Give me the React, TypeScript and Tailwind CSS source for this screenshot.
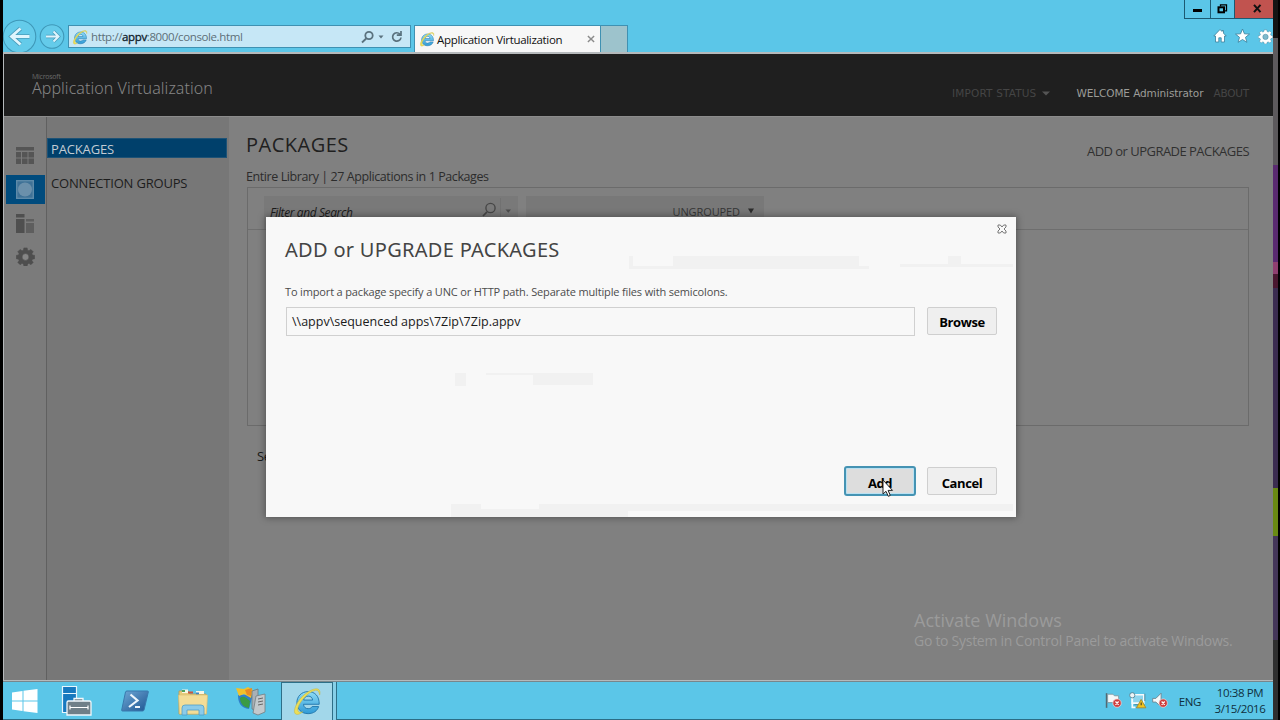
import React from "react";

function IeLogo({ size, id }: { size: number; id: string }) {
  return (
    <svg width={size} height={size} viewBox="0 0 32 32" className="shrink-0">
      <defs>
        <linearGradient id={id} x1="0" y1="0" x2="0" y2="1">
          <stop offset="0" stopColor="#8fdcf6" />
          <stop offset="1" stopColor="#2f9ad6" />
        </linearGradient>
      </defs>
      <path
        d="M29 19.5H12.2c.3 3 2.200 4.700 5 4.700 2 0 3.500-.8 4.300-2.300h6.900C27 26.500 23 29.500 17.200 29.500 10.200 29.500 5.200 24.700 5.200 17.800 5.200 11 10.200 6 17.200 6c7.400 0 12 5 11.800 13.500zM12.400 15h9.600c-.3-2.600-2-4.200-4.700-4.200s-4.500 1.600-4.900 4.200z"
        fill={`url(#${id})`}
        stroke="#2277ad"
        strokeWidth="1"
      />
      <path
        d="M29.500 9.500c.8-3 .2-5.600-2-6.300C22.500 1.800 12 8 6 17.500 2 24 1.500 29.500 4.800 30.200c2 .4 4.400-.8 6.700-2.700-3 1.200-5.600.7-5.300-3C6.600 18.500 17 6 25 4.500c2.600-.4 4 1.500 4.500 5z"
        fill="#ecdf58"
        stroke="#c4b649"
        strokeWidth=".6"
      />
    </svg>
  );
}

function Gear({ size, fill, hole, stroke }: { size: number; fill: string; hole: string; stroke: string }) {
  return (
    <svg width={size} height={size} viewBox="0 0 20 20" className="shrink-0">
      <path
        d="M8.300 1h3.400l.5 2.400 1.400.6 2.100-1.400 2.400 2.400-1.400 2.100.6 1.300 2.400.5v3.400l-2.400.5-.6 1.300 1.400 2.100-2.400 2.400-2.100-1.400-1.400.6-.5 2.200H8.300l-.5-2.200-1.400-.6-2.100 1.400-2.400-2.400 1.400-2.100-.6-1.300L.3 12.300V8.900l2.400-.5.6-1.300L1.900 5l2.400-2.400L6.400 4l1.400-.6z"
        fill={fill}
        stroke={stroke}
        strokeWidth=".6"
      />
      <circle cx="10" cy="10.500" r="3.600" fill={hole} stroke={stroke} strokeWidth=".6" />
    </svg>
  );
}

function BrowserBar() {
  return (
    <div className="flex h-[52px] shrink-0 bg-[#5bc6e8]">
      <div className="flex w-[411px] items-end">
        <svg width="65" height="34" viewBox="0 0 65 34" className="shrink-0">
          <g fill="#64cbea" stroke="#3f98b8" strokeWidth="1.100">
            <circle cx="16.500" cy="18.500" r="16.300" />
            <circle cx="49" cy="18.500" r="11.800" />
          </g>
          <g fill="none" stroke="#4a9dbb" strokeWidth="4.400">
            <path d="M26.500 18.500H9M17.500 10.500L8.500 18.500l9 8" />
            <path d="M43 18.500h11M50.500 13.500l5 5-5 5" strokeWidth="3.400" />
          </g>
          <g fill="none" stroke="#dff5fd" strokeWidth="2.800">
            <path d="M26.500 18.500H9M17.500 10.500L8.500 18.500l9 8" />
            <path d="M43 18.500h11M50.500 13.500l5 5-5 5" strokeWidth="2" />
          </g>
        </svg>
        <div className="mb-1 flex h-[23px] w-[343px] items-center border border-[#3f91b2] bg-[#c6e7f6] pl-[3px] pr-1">
          <IeLogo size={16} id="ieUrl" />
          <span className="ml-[3px] w-[272px] whitespace-nowrap pt-px font-['Open_Sans',sans-serif] text-[11.500px] leading-[20px] tracking-[-0.38px] text-[#5d6f78]">
            http://<span className="text-[#10202a] [-webkit-text-stroke:0.3px_#10202a]">appv</span>:8000/console.html
          </span>
          <svg width="46" height="16" viewBox="0 0 46 16" className="shrink-0" fill="none" stroke="#5a727e" strokeWidth="1.800">
            <circle cx="9" cy="6.500" r="3.700" />
            <path d="M6.200 9.500L2 13.500" />
            <path d="M18.500 6.500h5l-2.500 3z" fill="#5a727e" stroke="none" />
            <path d="M40 5.200A4.200 4.200 0 1 0 41 8.500M41 2v4.200h-4.200" strokeWidth="1.700" />
          </svg>
        </div>
      </div>
      <div className="flex items-end">
        <div className="flex h-[27px] w-[187px] items-center border border-b-0 border-[#3f91b2] bg-[#f7f7f7] pl-1">
          <IeLogo size={16} id="ieTab" />
          <span className="ml-[2px] w-[150px] whitespace-nowrap pt-[2px] font-['Open_Sans',sans-serif] text-[11.500px] leading-[24px] tracking-[-0.32px] text-[#111]">
            Application Virtualization
          </span>
          <svg width="8" height="8" viewBox="0 0 9 9" className="shrink-0">
            <path d="M1 1l7 7M8 1L1 8" stroke="#8b8b8b" strokeWidth="1.600" />
          </svg>
        </div>
        <div className="h-[27px] w-[27px] border border-b-0 border-l-0 border-[#3f91b2] bg-[#9dc3cc]" />
      </div>
      <div className="ml-auto flex flex-col items-end">
        <div className="flex h-[19px] border-b border-l border-[#1c5a72]">
          <div className="flex w-[26px] justify-center border-r border-[#1c5a72] pt-[9px]">
            <div className="h-[3px] w-[9px] bg-black" />
          </div>
          <div className="flex w-[24px] justify-center border-r border-[#1c5a72] pt-1">
            <svg width="11" height="10" viewBox="0 0 11 10" fill="none" stroke="#000">
              <path d="M3.500 2.500V.8h6v6H8" strokeWidth="1.300" />
              <rect x="1.500" y="3.300" width="5.500" height="5" strokeWidth="2" />
            </svg>
          </div>
          <div className="flex w-[38px] justify-center bg-[#c1534f] pl-[6px] pt-1">
            <svg width="9" height="9" viewBox="0 0 9 9">
              <path d="M1 .8l6.500 7.400M7.500.8L1 8.200" stroke="#111" strokeWidth="2" />
            </svg>
          </div>
        </div>
        <div className="mt-[9px] flex w-[60px] items-center gap-[7px] overflow-hidden">
          <svg width="14" height="16" viewBox="0 0 14 16" className="shrink-0">
            <path d="M7 1.500L.8 8h1.700v6h3.300V9.800h2.400V14h3.300V8h1.700L10.500 5.200V2.500H9v1z" fill="#fff" stroke="#397f9a" strokeWidth=".8" />
          </svg>
          <svg width="17" height="16" viewBox="0 0 17 16" className="shrink-0">
            <path d="M8.500 1l1.900 4.800 5.100.3-4 3.200 1.400 5-4.400-2.800-4.400 2.800 1.400-5-4-3.200 5.100-.3z" fill="#fff" stroke="#397f9a" strokeWidth=".8" />
          </svg>
          <Gear size={15} fill="#ffffff" hole="#7fb9cc" stroke="#397f9a" />
        </div>
      </div>
    </div>
  );
}

function AppHeader() {
  return (
    <div className="flex h-[62px] shrink-0 items-start justify-between bg-[#1f1f1f]">
      <div className="pl-[28px] pt-[19px] text-[#858585]">
        <div className="h-[7px] font-['Open_Sans',sans-serif] text-[7px] leading-[7px] tracking-[-0.25px] text-[#6a6a6a]">Microsoft</div>
        <div className="whitespace-nowrap font-['Noto_Sans',sans-serif] text-[16px] font-light leading-[16px] tracking-[0.06px]">Application Virtualization</div>
      </div>
      <div className="flex items-center pr-[24px] pt-[30px] font-['DejaVu_Sans',sans-serif] text-[10.500px] leading-[18px]">
        <span className="whitespace-nowrap tracking-[0.15px] text-[#454545]">IMPORT STATUS</span>
        <svg width="8" height="5" viewBox="0 0 8 5" className="ml-[6px]">
          <path d="M0 .5h8L4 4.500z" fill="#555" />
        </svg>
        <span className="ml-[26px] whitespace-nowrap tracking-[-0.1px] text-[#9c9c98]">WELCOME Administrator</span>
        <span className="ml-[10px] tracking-[-0.2px] text-[#454545]">ABOUT</span>
      </div>
    </div>
  );
}

function IconRail() {
  return (
    <div className="flex w-[43px] shrink-0 flex-col border-r border-[#606060] bg-[#7b7b7b] pt-[21px]">
      <div className="flex h-[34px] items-center justify-center">
        <svg width="18" height="17" viewBox="0 0 18 17" fill="#555">
          <path d="M0 0h18v3.500H0zM0 5h5v5.500H0zM6 5h5.500v5.500H6zM12.500 5H18v5.500h-5.500zM0 11.500h5V17H0zM6 11.500h5.500V17H6zM12.500 11.500H18V17h-5.500z" />
        </svg>
      </div>
      <div className="flex h-[34px] items-center justify-center">
        <div className="flex h-[29px] w-[39px] items-center justify-center bg-[#004b7d]">
          <svg width="18" height="19" viewBox="0 0 18 19">
            <rect x=".7" y=".7" width="16.600" height="17.600" fill="#3f7297" stroke="#5d8aa9" strokeWidth="1.400" />
            <circle cx="9" cy="9.500" r="7" fill="#6b90ab" />
          </svg>
        </div>
      </div>
      <div className="flex h-[34px] items-center justify-center">
        <svg width="18" height="19" viewBox="0 0 18 19">
          <path d="M0 0h8.500v3.500H0zM0 5h8.500v14H0z" fill="#4f4f4f" />
          <path d="M10 5h8v2.500h-8zM10 9h8v10h-8z" fill="#5e5e5e" />
        </svg>
      </div>
      <div className="flex h-[34px] items-center justify-center pb-[2px]">
        <Gear size={19} fill="#4e4e4e" hole="#858585" stroke="#4e4e4e" />
      </div>
    </div>
  );
}

function NavPanel() {
  return (
    <div className="w-[182px] shrink-0 bg-[#777777] pt-[21px] font-['Open_Sans',sans-serif] text-[13px]">
      <div className="mr-[2px] flex h-[20px] items-center border border-[#1d5276] bg-[#00406b] pl-[3px] pt-[3px] text-[#c3ccd3]">
        <span className="whitespace-nowrap tracking-[-0.15px]">PACKAGES</span>
      </div>
      <div className="mt-[16px] flex h-[20px] items-center pl-[4px] text-[#1d1d1d]">
        <span className="whitespace-nowrap tracking-[-0.18px]">CONNECTION GROUPS</span>
      </div>
    </div>
  );
}

function Content() {
  return (
    <div className="flex min-w-0 flex-1 flex-col bg-[#808080] pl-[17px] pr-[24px] font-['Open_Sans',sans-serif]">
      <div className="flex h-[50px] justify-between">
        <span className="pt-[15px] text-[20px] leading-[26px] tracking-[0.5px] text-[#202020]">PACKAGES</span>
        <span className="whitespace-nowrap pt-[24px] text-[13px] leading-[20px] tracking-[-0.53px] text-[#303030]">ADD or UPGRADE PACKAGES</span>
      </div>
      <div className="flex h-[20px] items-center whitespace-nowrap text-[12.500px] tracking-[-0.42px] text-[#2c2c2c]">
        Entire Library | 27 Applications in 1 Packages
      </div>
      <div className="ml-px flex h-[239px] flex-col border border-[#6b6b6b]">
        <div className="flex h-[42px] gap-[8px] border-b border-[#6e6e6e] pl-[16px] pt-[8px]">
          <div className="flex h-[33px] w-[254px] bg-[#797979]">
            <span className="w-[217px] whitespace-nowrap pl-[6px] pt-[8px] text-[12px] italic leading-[18px] tracking-[-0.4px] text-[#1b1b1b]">Filter and Search</span>
            <svg width="37" height="33" viewBox="0 0 37 33" fill="none">
              <circle cx="9.500" cy="12" r="4.600" stroke="#474747" strokeWidth="1.400" />
              <path d="M6 15.800L2 20" stroke="#474747" strokeWidth="1.700" />
              <path d="M19.500 2v24" stroke="#717171" />
              <path d="M24.500 13.500h5.500l-2.700 3.200z" fill="#4c4c4c" />
            </svg>
          </div>
          <div className="flex h-[33px] w-[238px] justify-end bg-[#787878] pr-[9px] pt-[7px]">
            <span className="text-[11px] leading-[18px] tracking-[-0.1px] text-[#363636]">UNGROUPED</span>
            <svg width="8" height="6" viewBox="0 0 8 6" className="ml-[7px] mt-[5px]">
              <path d="M1 .500h6L4 5.500z" fill="#2c2c2c" />
            </svg>
          </div>
        </div>
      </div>
      <div className="mt-[20px] pl-[11px] text-[13px] leading-[20px] tracking-[-0.5px] text-[#181818]">Selected packages</div>
      <div className="mt-[142px] pl-[668px] text-[#9b9b9b]">
        <div className="whitespace-nowrap text-[18px] leading-[24px]">Activate Windows</div>
        <div className="whitespace-nowrap text-[14px] leading-[18px] tracking-[-0.28px]">Go to System in Control Panel to activate Windows.</div>
      </div>
    </div>
  );
}

function Dialog() {
  return (
    <div className="absolute left-[266px] top-[217px] flex h-[300px] w-[750px] flex-col bg-[#f8f8f8] shadow-[0_0_7px_1px_rgba(0,0,0,0.35)]">
      <svg width="750" height="300" viewBox="0 0 750 300" className="absolute left-0 top-0">
        <path
          d="M407 39h186v13H407zM363 49h240v3H363zM363 39h4v13h-4zM634 47h113v3H634zM682 39h13v10h-13zM189 156h11v13h-11zM220 156h47v2h-47zM267 156h60v12h-60zM185 287h30v5h58v-5h474v7H362v6H185z"
          fill="#f1f1f1"
        />
      </svg>
      <div className="relative flex h-full flex-col">
        <div className="flex h-[64px] justify-between pl-[19px] pr-[9px]">
          <span className="whitespace-nowrap pt-[20px] font-['Noto_Sans',sans-serif] text-[20px] leading-[26px] tracking-[0.3px] text-[#444]">ADD or UPGRADE PACKAGES</span>
          <svg width="10" height="10" viewBox="0 0 10 10" className="mt-[7px]">
            <path d="M1 1h2.300L5 3l1.700-2H9v2L7 5l2 2v2H6.700L5 7 3.300 9H1V7l2-2-2-2z" fill="#f8f8f8" stroke="#777" />
          </svg>
        </div>
        <div className="h-[26px] whitespace-nowrap pl-[19px] pt-[2px] font-['Open_Sans',sans-serif] text-[11px] leading-[18px] tracking-[-0.15px] text-[#4c4c4c]">
          To import a package specify a UNC or HTTP path. Separate multiple files with semicolons.
        </div>
        <div className="flex gap-[12px] pl-[20px] font-['Open_Sans',sans-serif]">
          <div className="flex h-[29px] w-[629px] items-center whitespace-nowrap border border-[#d0d0d0] bg-[#f8f8f8] pl-[5px] pt-[2px] text-[12.500px] text-[#1a1a1a]">
            {"\\\\appv\\sequenced apps\\7Zip\\7Zip.appv"}
          </div>
          <button className="h-[28px] w-[70px] rounded-[2px] border border-[#cfcfcf] bg-[#efefef] pt-[2px] text-[13px] font-bold leading-[20px] tracking-[-0.4px] text-black">Browse</button>
        </div>
        <div className="mt-auto flex items-center justify-end gap-[11px] pb-[21px] pr-[19px] font-['Open_Sans',sans-serif] text-[13px] font-bold leading-[20px] tracking-[-0.4px] text-black">
          <button className="h-[30px] w-[72px] rounded-[3px] border-2 border-[#4593b3] bg-[#dddddd] pt-[3px] shadow-[inset_0_0_0_1px_#b9e1f2]">Add</button>
          <button className="h-[28px] w-[70px] rounded-[2px] border border-[#cfcfcf] bg-[#efefef] pt-[3px]">Cancel</button>
        </div>
      </div>
    </div>
  );
}

function Taskbar() {
  return (
    <div className="flex h-[38px] shrink-0 items-center border-b border-[#2b6d85] bg-[#5bc6e8]">
      <svg width="26" height="24" viewBox="0 0 26 24" className="ml-[9px] shrink-0" fill="#fff">
        <path d="M0 3.500L10.500 2v9.500H0zM11.500 1.800L25.500 0v11.500H11.500zM0 12.500h10.500V22L0 20.500zM11.500 12.500h14V24l-14-1.800z" />
      </svg>
      <svg width="31" height="32" viewBox="0 0 31 32" className="ml-[23px] shrink-0">
        <path d="M1.500 1.500h14v26h-14zM1.500 8.500h14" fill="#1779bf" stroke="#e6f6fd" strokeWidth="1.200" />
        <path d="M13 16v-2.500h9V16M6 17.500q0-1.500 1.500-1.500h21q1.500 0 1.500 1.500V30H6z" fill="#6f7f88" stroke="#f1f8fb" strokeWidth="1.300" />
        <path d="M9 22.500h18M9 20.500v4M27 20.500v4" stroke="#fff" strokeWidth="1.200" />
      </svg>
      <svg width="28" height="22" viewBox="0 0 28 22" className="ml-[29px] mt-px shrink-0">
        <defs>
          <linearGradient id="ps" x1="0" y1="0" x2="1" y2="1">
            <stop offset="0" stopColor="#6fa8d6" />
            <stop offset="1" stopColor="#1d5591" />
          </linearGradient>
        </defs>
        <path d="M6 1h20.500q1 0 .8 1L23 20q-.3 1-1.500 1H1.500q-1 0-.8-1L4.500 2Q4.800 1 6 1z" fill="url(#ps)" stroke="#3979ad" />
        <path d="M9.500 4.500l7 6-8.500 6.500M14 17h5" fill="none" stroke="#eef6fc" strokeWidth="2.200" />
      </svg>
      <svg width="32" height="28" viewBox="0 0 32 28" className="ml-[28px] mt-[3px] shrink-0">
        <path d="M2 3h9l2 3h16v20H2z" fill="#e8cc7c" stroke="#b99b4e" strokeWidth=".8" />
        <path d="M5 1.500h6V5H5zM19 3h8v3h-8z" fill="#f7f6e4" />
        <path d="M5 2h3v2H5z" fill="#4fa45a" />
        <path d="M11 3.500h5v2h-5z" fill="#c8573f" />
        <path d="M19 4.500h3v2h-3z" fill="#3a84c6" />
        <path d="M1.500 7h29l-1 19h-27z" fill="#f3dd97" stroke="#d8be74" strokeWidth=".7" />
        <path d="M5 27v-7q0-3 3-3h16q3 0 3 3v7h-5v-5H10v5z" fill="#8ccbe9" stroke="#4e9fc9" strokeWidth=".8" />
      </svg>
      <svg width="32" height="30" viewBox="0 0 32 30" className="ml-[27px] shrink-0">
        <path d="M2 9c0 8 3 13 11 14l4-15z" fill="#2f7fc9" />
        <path d="M4 12c3-3 7 0 10 3l-1 7C7 21 4 17 4 12z" fill="#3a9b45" />
        <path d="M0 2l8 1 4-2 5 3-2 8-7-4-5 2z" fill="#f0c12c" />
        <path d="M9 4l7-2-1 8-4-1z" fill="#e88a24" />
        <path d="M16 5l6-2v22l-6-2z" fill="#a9b1b6" stroke="#6f777c" strokeWidth=".8" />
        <path d="M20 10l9-2v18l-7 3-5-2z" fill="#c3c9cc" stroke="#757d82" strokeWidth=".8" />
        <path d="M22 13l5-1M22 16l5-1M22 19l5-1" stroke="#666" />
      </svg>
      <div className="ml-[13px] flex h-[38px] w-[52px] shrink-0 items-center justify-center border border-b-0 border-[#2d6f88] bg-[#a2d7ea]">
        <IeLogo size={30} id="ieTask" />
      </div>
      <div className="h-[38px] w-[4px] shrink-0 border-r border-[#2d6f88] bg-[#86cfe8]" />
      <div className="ml-auto flex items-center pr-[7px] font-['Open_Sans',sans-serif] text-[11.500px] tracking-[-0.4px] text-[#10303e]">
        <svg width="65" height="19" viewBox="0 0 62 18" className="shrink-0">
          <path d="M1.500 2v14" stroke="#526a73" strokeWidth="1.500" />
          <path d="M2.500 3h5l1.500 1.500h4V11H2.500z" fill="#f4f8f9" stroke="#7c929b" strokeWidth=".8" />
          <path d="M26 3.500h11v8H26z" fill="#8dd5ee" stroke="#f5fafb" strokeWidth="1.500" />
          <path d="M38 2.500v7M28 13h4" stroke="#4d7d8f" strokeWidth=".8" />
          <path d="M26 2.500v13h3" stroke="#f5fafb" strokeWidth="1.600" fill="none" />
          <circle cx="26" cy="4" r="2.500" fill="#eef6f9" stroke="#4d7d8f" strokeWidth=".8" />
          <path d="M34.500 8l4.500 8h-9z" fill="#f2c41d" stroke="#a3852a" strokeWidth=".8" />
          <path d="M34.500 11v2.500" stroke="#333" />
          <path d="M45.500 7h3l5-5v13l-5-4.500h-3z" fill="#f5f9fa" stroke="#6b7f88" strokeWidth=".8" />
          <g fill="#cf3b3b" stroke="#f3d4d4" strokeWidth=".7">
            <circle cx="11.500" cy="11.500" r="4" />
            <circle cx="55.500" cy="11.500" r="4" />
          </g>
          <path d="M10 10l3 3M13 10l-3 3M54 10l3 3M57 10l-3 3" stroke="#fff" strokeWidth="1.200" />
        </svg>
        <span className="ml-[9px] pt-[2px]">ENG</span>
        <div className="ml-[13px] w-[52px] whitespace-nowrap pt-px text-center leading-[16px]">
          <div>10:38 PM</div>
          <div>3/15/2016</div>
        </div>
      </div>
    </div>
  );
}

export default function App() {
  return (
    <div className="relative flex h-[720px] w-[1280px] overflow-hidden bg-black pl-[3px]">
      <div className="flex w-[1270px] shrink-0 flex-col">
        <BrowserBar />
        <div className="flex h-[629px] shrink-0 flex-col border-b border-l border-t-2 border-[#b5b9bb]">
          <AppHeader />
          <div className="h-px shrink-0 bg-[#8c8c8c]" />
          <div className="flex min-h-0 flex-1">
            <IconRail />
            <NavPanel />
            <Content />
          </div>
        </div>
        <div className="h-px shrink-0 bg-[#78868c]" />
        <Taskbar />
      </div>
      <div className="flex w-[5px] shrink-0 flex-col">
        <div className="h-[38px] bg-[#141414]" />
        <div className="h-[127px] bg-[#5d5a5d]" />
        <div className="h-[97px] bg-[#5a2a70]" />
        <div className="h-[12px] bg-[#8f3f70]" />
        <div className="h-[14px] bg-[#4a1730]" />
        <div className="h-[200px] bg-[#3b2c50]" />
        <div className="h-[48px] bg-[#6a8a14]" />
        <div className="h-[104px] bg-[#443659]" />
        <div className="h-[80px] bg-[#2f2f2f]" />
      </div>
      <Dialog />
      <svg width="13" height="20" viewBox="0 0 13 20" className="absolute left-[882px] top-[479px]">
        <path d="M1 1v14l3-2.700 2.300 5 2-.9-2.200-5H10.500z" fill="#fff" stroke="#222" />
      </svg>
    </div>
  );
}
